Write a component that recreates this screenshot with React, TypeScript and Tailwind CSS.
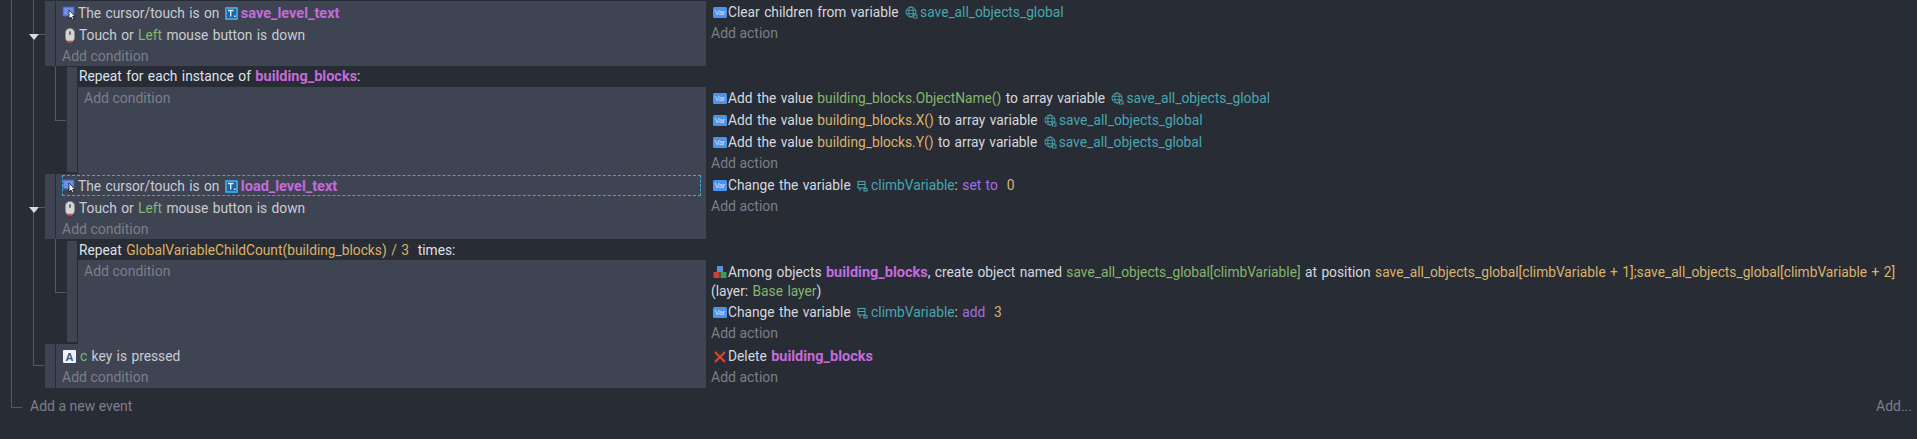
import React from "react";

const P = ({ c }: { c: string }) => <span className="font-bold text-[14.5px] text-[#c36bdc]">{c}</span>;
const G = ({ c }: { c: string }) => <span className="text-[#86b56c]">{c}</span>;
const O = ({ c }: { c: string }) => <span className="text-[#dbb26a]">{c}</span>;
const T = ({ c }: { c: string }) => <span className="text-[#49a6ad]">{c}</span>;
const V = ({ c }: { c: string }) => <span className="text-[#a26ee6]">{c}</span>;

const CursorIcon = () => (
  <svg width="14" height="14" viewBox="0 0 14 14" className="inline-block align-[-2px] mr-[2px]">
    <rect x="1" y="1" width="11" height="9" fill="#6f8fe6" stroke="#3d5cb8" />
    <path d="M7 4v9l2-2 1.5 3 1.5-.7-1.4-2.8H13z" fill="#fff" stroke="#111" strokeWidth="0.8" />
  </svg>
);
const MouseIcon = () => (
  <svg width="12" height="15" viewBox="0 0 12 15" className="inline-block align-[-3px] mr-[3px] ml-[2px]">
    <rect x="1.5" y="0.5" width="9" height="13.5" rx="4.2" fill="#d5d6d2" stroke="#8c8c88" strokeWidth="0.7" />
    <rect x="5" y="3" width="2" height="4" rx="1" fill="#6f6f6f" />
    <path d="M3 12.8h6l-1.5 2h-3z" fill="#d8453c" />
  </svg>
);
const TextObj = () => (
  <svg width="13" height="13" viewBox="0 0 13 13" className="inline-block align-[-2px] ml-px mr-[3px]">
    <rect width="13" height="13" rx="1" fill="#3f9fdc" />
    <rect x="2" y="2" width="9" height="9" fill="#1e63a8" />
    <path d="M3 3.5h5.5M5.7 3.5v6" stroke="#dff1ff" strokeWidth="1.4" />
    <rect x="9" y="8.5" width="1.5" height="1.5" fill="#dff1ff" />
  </svg>
);
const VarIcon = () => (
  <svg width="14" height="11" viewBox="0 0 14 11" className="inline-block align-[-1px] ml-[2px] mr-px">
    <rect width="14" height="11" rx="1.5" fill="#4c93ee" />
    <text x="7" y="8.3" textAnchor="middle" fontSize="7" fontFamily="Liberation Sans" fill="#d6e8ff">Var</text>
  </svg>
);
const Globe = () => (
  <svg width="13" height="13" viewBox="0 0 13 13" fill="none" stroke="#49a6ad" strokeWidth="0.9" className="inline-block align-[-2px] ml-[2px] mr-[2px]">
    <circle cx="6" cy="6" r="5" />
    <ellipse cx="6" cy="6" rx="2.2" ry="5" />
    <path d="M1 4.3h10M1 7.7h10" />
    <rect x="8.5" y="9" width="3.5" height="3" fill="#282c35" />
  </svg>
);
const SceneVar = () => (
  <svg width="11" height="12" viewBox="0 0 11 12" fill="none" stroke="#49a6ad" strokeWidth="1.1" className="inline-block align-[-2px] ml-[2px] mr-[3px]">
    <rect x="1" y="1.5" width="7" height="6.5" />
    <path d="M1 4.5h7M3 8v3M7 8.5h3v2.5H7z" />
  </svg>
);
const Cubes = () => (
  <svg width="14" height="14" viewBox="0 0 14 14" className="inline-block align-[-2px] ml-[2px] mr-px">
    <rect x="4" y="1" width="6" height="6" fill="#5b8fd6" />
    <rect x="0.5" y="7" width="6" height="6" fill="#c8413a" />
    <rect x="7.5" y="7" width="6" height="6" fill="#3f9a58" />
  </svg>
);
const Cross = () => (
  <svg width="14" height="14" viewBox="0 0 14 14" className="inline-block align-[-3px] ml-[2px] mr-px">
    <path d="M2 2l10 10M12 2L2 12" stroke="#d8442c" strokeWidth="2.2" />
  </svg>
);
const KeyIcon = () => (
  <svg width="13" height="13" viewBox="0 0 13 13" className="inline-block align-[-2px] ml-px mr-[4px]">
    <rect width="13" height="13" rx="1" fill="#eef1f5" />
    <text x="6.5" y="10.5" textAnchor="middle" fontSize="11" fontWeight="700" fontFamily="Liberation Sans" fill="#36597f">A</text>
  </svg>
);

const Line = ({ children }: { children: React.ReactNode }) => (
  <div className="h-[22px] leading-[22px] whitespace-pre">{children}</div>
);
const Wrapped = ({ children }: { children: React.ReactNode }) => <div className="leading-[19px] pt-[3px]">{children}</div>;
const Add = ({ c, h = "h-[21px]" }: { c: string; h?: string }) => (
  <div className={`${h} flex items-center text-[14px] [word-spacing:0px] text-[#7b7f89]`}>{c}</div>
);

function Event({ conditions, actions, h, mt, pad = "" }: { conditions: React.ReactNode; actions: React.ReactNode; h: string; mt: string; pad?: string }) {
  return (
    <div className={`flex ${h} ${mt} ml-[45px]`}>
      <div className="w-[10px] mr-px bg-[#3f4452]" />
      <div className="w-[650px] bg-[#3f4452] pl-[6px]">{conditions}</div>
      <div className={`flex-1 pl-[5px] pr-[14px] text-[#d5d8df] ${pad}`}>{actions}</div>
    </div>
  );
}

function SubEvent({ h, hh, mt, header, actions }: { h: string; hh: string; mt: string; header: React.ReactNode; actions: React.ReactNode }) {
  return (
    <div className={`flex ${h} ${mt} ml-[67px]`}>
      <div className="w-[10px] mr-px bg-[#3f4452]" />
      <div className="flex-1 flex flex-col">
        <div className={`${hh} flex items-center whitespace-pre text-[#dfe2ea] pl-px`}>
          <span>{header}</span>
        </div>
        <div className="flex-1 flex">
          <div className="w-[628px] bg-[#3f4452] pl-[6px] pt-px">
            <Add c="Add condition" />
          </div>
          <div className="flex-1 pl-[5px] pr-[14px] text-[#d5d8df]">{actions}</div>
        </div>
      </div>
    </div>
  );
}

const Cursor = ({ name }: { name: string }) => (
  <Line>
    <CursorIcon />
    The cursor/touch is on <TextObj />
    <P c={name} />
  </Line>
);
const Touch = () => (
  <Line>
    <MouseIcon />
    Touch or <G c="Left" /> mouse button is down
  </Line>
);
const GlobalVar = () => (
  <>
    <Globe />
    <T c="save_all_objects_global" />
  </>
);
const Arrow = ({ className }: { className: string }) => (
  <div className={`absolute left-[29px] ${className}`}>
    <div className="flex items-start">
      <div className="w-0 h-0 border-l-[5px] border-r-[5px] border-t-[6px] border-l-transparent border-r-transparent border-t-[#d8dadf]" />
      <div className="w-[6px] h-px bg-[#555963]" />
    </div>
  </div>
);

export default function App() {
  return (
    <div className="relative w-[1917px] h-[439px] overflow-hidden bg-[#282c35] text-[13.75px] [word-spacing:1px] text-[#c9ccd3] font-['Roboto',sans-serif]">
      {/* tree connectors */}
      <div className="absolute left-[11px] top-0 h-[408px] w-[11px] border-l border-b border-[#555963]" />
      <div className="absolute left-[33px] top-0 h-[366px] w-[11px] border-l border-b border-[#555963]" />
      <div className="absolute left-[55px] top-[66px] h-[55px] w-[11px] border-l border-b border-[#555963]" />
      <div className="absolute left-[55px] top-[239px] h-[54px] w-[11px] border-l border-b border-[#555963]" />
      <Arrow className="top-[34px]" />
      <Arrow className="top-[207px]" />
      {/* selection */}
      <div className="absolute left-[62px] top-[175px] w-[639px] h-[21px] border border-dashed border-[#39a9dc]" />

      <Event
        mt="mt-px"
        h="h-[65px]"
        conditions={
          <div className="pt-px">
            <Cursor name="save_level_text" />
            <Touch />
            <Add c="Add condition" />
          </div>
        }
        actions={
          <>
            <Line>
              <VarIcon />
              Clear children from variable <GlobalVar />
            </Line>
            <Add c="Add action" />
          </>
        }
      />
      <SubEvent
        mt="mt-px"
        h="h-[105px]"
        hh="h-[20px]"
        header={
          <>
            Repeat for each instance of <P c="building_blocks" />:
          </>
        }
        actions={
          <>
            <Line>
              <VarIcon />
              Add the value <G c="building_blocks.ObjectName()" /> to array variable <GlobalVar />
            </Line>
            <Line>
              <VarIcon />
              Add the value <O c="building_blocks.X()" /> to array variable <GlobalVar />
            </Line>
            <Line>
              <VarIcon />
              Add the value <O c="building_blocks.Y()" /> to array variable <GlobalVar />
            </Line>
            <Add c="Add action" />
          </>
        }
      />
      <Event
        mt="mt-[2px]"
        h="h-[65px]"
        conditions={
          <div className="pt-px">
            <Cursor name="load_level_text" />
            <Touch />
            <Add c="Add condition" />
          </div>
        }
        actions={
          <>
            <Line>
              <VarIcon />
              Change the variable <SceneVar />
              <T c="climbVariable" />: <V c="set to" />  <O c="0" />
            </Line>
            <Add c="Add action" />
          </>
        }
      />
      <SubEvent
        mt="mt-[2px]"
        h="h-[101px]"
        hh="h-[19px]"
        header={
          <>
            Repeat <O c="GlobalVariableChildCount(building_blocks) / 3" />  times:
          </>
        }
        actions={
          <>
            <Wrapped>
              <Cubes />
              Among objects <P c="building_blocks" />, create object named <G c="save_all_objects_global[climbVariable]" /> at position{" "}
              <O c="save_all_objects_global[climbVariable + 1];save_all_objects_global[climbVariable + 2]" /> (layer: <G c="Base layer" />)
            </Wrapped>
            <Line>
              <VarIcon />
              Change the variable <SceneVar />
              <T c="climbVariable" />: <V c="add" />  <O c="3" />
            </Line>
            <Add c="Add action" />
          </>
        }
      />
      <Event
        mt="mt-[2px]"
        h="h-[44px]"
        pad="pt-px"
        conditions={
          <div className="pt-px">
            <Line>
              <KeyIcon />
              <G c="c" /> key is pressed
            </Line>
            <Add c="Add condition" />
          </div>
        }
        actions={
          <>
            <Line>
              <Cross />
              Delete <P c="building_blocks" />
            </Line>
            <Add c="Add action" />
          </>
        }
      />
      <div className="mt-[8px] h-[20px] flex items-center justify-between pl-[30px] pr-[5px] text-[14px] [word-spacing:0px] text-[#7b7f89]">
        <span>Add a new event</span>
        <span>Add...</span>
      </div>
    </div>
  );
}
